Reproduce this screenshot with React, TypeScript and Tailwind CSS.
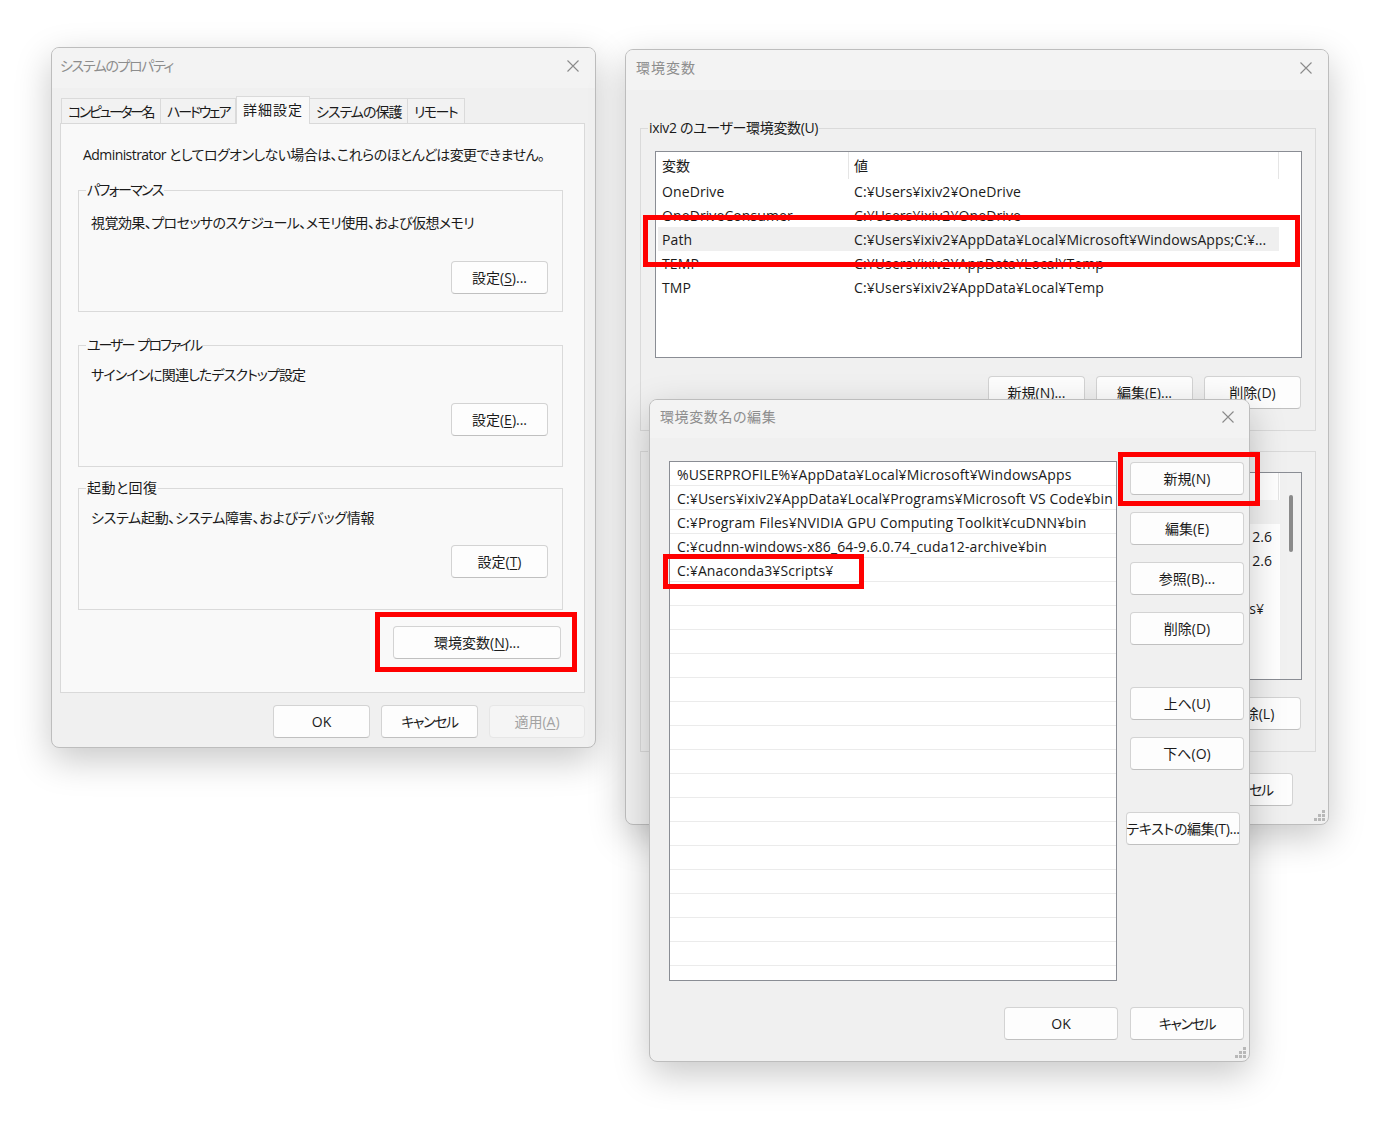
import React from "react";

const FONT =
  "font-['Open_Sans','Noto_Sans_CJK_JP',sans-serif] [font-feature-settings:'palt']";

function CloseX() {
  return (
    <svg width="12" height="12" viewBox="0 0 12 12">
      <path d="M0.5 0.5L11.5 11.5M11.5 0.5L0.5 11.5" stroke="#8a8a8a" strokeWidth="1.1" />
    </svg>
  );
}

function Grip() {
  return (
    <svg width="12" height="12" viewBox="0 0 12 12" className="absolute bottom-[2px] right-[2px]">
      <g fill="#b8b8b8">
        <rect x="8" y="0" width="3" height="3" />
        <rect x="4" y="4" width="3" height="3" />
        <rect x="8" y="4" width="3" height="3" />
        <rect x="0" y="8" width="3" height="3" />
        <rect x="4" y="8" width="3" height="3" />
        <rect x="8" y="8" width="3" height="3" />
      </g>
    </svg>
  );
}

function Btn({
  children,
  className = "",
  disabled = false,
}: {
  children: React.ReactNode;
  className?: string;
  disabled?: boolean;
}) {
  return (
    <div
      className={`flex h-[33px] shrink-0 items-center justify-center whitespace-nowrap rounded-[4px] border text-[14px] ${
        disabled
          ? "border-[#e6e6e6] bg-[#f5f5f5] text-[#a3a3a3]"
          : "border-[#d3d3d3] border-b-[#c0c0c0] bg-[#fdfdfd] text-[#1b1b1b]"
      } ${className}`}
    >
      {children}
    </div>
  );
}

function U({ children }: { children: React.ReactNode }) {
  return <span className="underline underline-offset-2">{children}</span>;
}

function Win({
  className,
  title,
  titleClass,
  children,
  grip = false,
}: {
  className: string;
  title: React.ReactNode;
  titleClass: string;
  children: React.ReactNode;
  grip?: boolean;
}) {
  return (
    <div
      className={`absolute flex flex-col overflow-hidden rounded-[8px] border border-[#bdbdbd] bg-[#f0f0f0] shadow-[0_12px_36px_rgba(0,0,0,0.22)] ${className}`}
    >
      <div className={`flex shrink-0 items-center justify-between bg-[#f3f3f3] pb-[5px] ${titleClass}`}>
        <span className="whitespace-nowrap text-[14px] text-[#8d8d8d]">{title}</span>
        <CloseX />
      </div>
      {children}
      {grip && <Grip />}
    </div>
  );
}

function Group({
  label,
  bg,
  className = "",
  children,
}: {
  label?: React.ReactNode;
  bg: string;
  className?: string;
  children: React.ReactNode;
}) {
  return (
    <div className={`relative flex shrink-0 flex-col border border-[#dadada] ${className}`}>
      {label && (
        <span className={`absolute left-[7px] top-[-11px] flex whitespace-nowrap px-[1px] text-[14px] leading-[20px] ${bg}`}>
          {label}
        </span>
      )}
      {children}
    </div>
  );
}

function SystemProps() {
  const tabs = [
    { t: "コンピューター名", w: "w-[100px]", tr: "tracking-[-2.4px]" },
    { t: "ハードウェア", w: "w-[76px]", tr: "tracking-[-2.2px]" },
    { t: "詳細設定", w: "w-[74px]", tr: "tracking-[1px]", sel: true },
    { t: "システムの保護", w: "w-[99px]", tr: "tracking-[-1px]" },
    { t: "リモート", w: "w-[58px]", tr: "tracking-[-1.6px]" },
  ];
  return (
    <Win
      className="left-[51px] top-[47px] h-[701px] w-[545px]"
      title={<span className="tracking-[-1.4px]">システムのプロパティ</span>}
      titleClass="h-[40px] pl-[8px] pr-[16px]"
    >
      <div className="relative z-10 mt-[8px] flex h-[27px] items-end pl-[9px]">
        {tabs.map((tab) => (
          <div
            key={tab.t}
            className={`flex items-center whitespace-nowrap border border-[#dadada] pl-[6px] text-[14px] ${tab.w} ${tab.tr} ${
              tab.sel
                ? "-mb-px h-[28px] border-b-0 bg-[#f9f9f9] pb-[3px]"
                : "-ml-px h-[25px] border-b-0 bg-[#f2f2f2] first:ml-0"
            }`}
          >
            {tab.t}
          </div>
        ))}
      </div>
      <div className="ml-[8px] flex h-[570px] w-[525px] flex-col border border-[#d9d9d9] bg-[#f9f9f9]">
        <div className="ml-[22px] mt-[21px] whitespace-nowrap text-[14px] leading-[20px] tracking-[-0.57px]">
          Administrator としてログオンしない場合は、これらのほとんどは変更できません。
        </div>
        <Group
          label={<span className="tracking-[-1.6px]">パフォーマンス</span>}
          bg="bg-[#f9f9f9]"
          className="ml-[17px] mt-[25px] h-[122px] w-[485px]"
        >
          <div className="ml-[12px] mt-[22px] whitespace-nowrap text-[14px] leading-[20px] tracking-[-0.55px]">
            視覚効果、プロセッサのスケジュール、メモリ使用、および仮想メモリ
          </div>
          <Btn className="mr-[14px] mt-[28px] w-[97px] self-end">
            設定(<U>S</U>)...
          </Btn>
        </Group>
        <Group
          label={
            <>
              <span className="tracking-[-2px]">ユーザー</span>
              <span className="ml-[4px] tracking-[-1.9px]">プロファイル</span>
            </>
          }
          bg="bg-[#f9f9f9]"
          className="ml-[17px] mt-[33px] h-[122px] w-[485px]"
        >
          <div className="ml-[12px] mt-[19px] whitespace-nowrap text-[14px] leading-[20px] tracking-[-0.9px]">
            サインインに関連したデスクトップ設定
          </div>
          <Btn className="mr-[14px] mt-[18px] w-[97px] self-end">
            設定(<U>E</U>)...
          </Btn>
        </Group>
        <Group
          label={<span className="tracking-[0.4px]">起動と回復</span>}
          bg="bg-[#f9f9f9]"
          className="ml-[17px] mt-[21px] h-[122px] w-[485px]"
        >
          <div className="ml-[12px] mt-[19px] whitespace-nowrap text-[14px] leading-[20px] tracking-[-0.26px]">
            システム起動、システム障害、およびデバッグ情報
          </div>
          <Btn className="mr-[14px] mt-[17px] w-[97px] self-end">
            設定(<U>T</U>)
          </Btn>
        </Group>
        <Btn className="ml-[332px] mt-[16px] w-[168px]">
          環境変数(<U>N</U>)...
        </Btn>
      </div>
      <div className="mt-[12px] flex justify-end gap-[11px] pr-[10px]">
        <Btn className="w-[97px]">OK</Btn>
        <Btn className="w-[97px] tracking-[-1.4px]">キャンセル</Btn>
        <Btn className="w-[96px]" disabled>
          適用(<U>A</U>)
        </Btn>
      </div>
    </Win>
  );
}

function EnvVars() {
  const user = [
    ["OneDrive", "C:¥Users¥ixiv2¥OneDrive"],
    ["OneDriveConsumer", "C:¥Users¥ixiv2¥OneDrive"],
    ["Path", "C:¥Users¥ixiv2¥AppData¥Local¥Microsoft¥WindowsApps;C:¥..."],
    ["TEMP", "C:¥Users¥ixiv2¥AppData¥Local¥Temp"],
    ["TMP", "C:¥Users¥ixiv2¥AppData¥Local¥Temp"],
  ];
  const sys = [
    ["ComSpec", "", "", true],
    ["CUDA_PATH", "C:¥Program Files¥NVIDIA GPU Computing Toolkit¥CUDA¥v12.6", "pr-[7px]"],
    ["CUDA_PATH_V12_6", "C:¥Program Files¥NVIDIA GPU Computing Toolkit¥CUDA¥v12.6", "pr-[7px]"],
    ["DriverData", "", ""],
    ["NVTOOLSEXT_PATH", "C:¥Program Files¥NVIDIA Corporation¥NvToolsExt¥bin¥tools¥", "pr-[15px]"],
    ["OS", "", ""],
    ["", "", ""],
    ["", "", ""],
  ] as [string, string, string, boolean?][];
  return (
    <Win
      className="left-[625px] top-[49px] h-[776px] w-[704px]"
      title={<span className="tracking-[1px]">環境変数</span>}
      titleClass="h-[40px] pl-[10px] pr-[16px]"
      grip
    >
      <Group
        label={<span className="tracking-[-0.35px]">ixiv2 のユーザー環境変数(U)</span>}
        bg="bg-[#f0f0f0]"
        className="ml-[14px] mt-[38px] h-[303px] w-[676px]"
      >
        <div className="ml-[14px] mt-[22px] flex h-[207px] w-[647px] flex-col overflow-hidden border border-[#8a8d94] bg-white text-[14px] tracking-[0.1px]">
          <div className="flex h-[27px] shrink-0">
            <div className="flex w-[193px] items-center border-r border-[#e5e5e5] pl-[6px]">変数</div>
            <div className="flex w-[430px] items-center border-r border-[#e5e5e5] pl-[5px]">値</div>
          </div>
          {user.map(([k, v]) => (
            <div
              key={k}
              className={`ml-[2px] flex h-[24px] w-[621px] shrink-0 items-center whitespace-nowrap ${
                k === "Path" ? "bg-[#efefef]" : ""
              }`}
            >
              <div className="w-[192px] pl-[4px]">{k}</div>
              <div className="pl-[4px]">{v}</div>
            </div>
          ))}
        </div>
        <div className="mr-[14px] mt-[18px] flex justify-end gap-[11px]">
          <Btn className="w-[97px]">新規(N)...</Btn>
          <Btn className="w-[97px]">編集(E)...</Btn>
          <Btn className="w-[97px]">削除(D)</Btn>
        </div>
      </Group>
      <Group label="システム環境変数(S)" bg="bg-[#f0f0f0]" className="ml-[14px] mt-[20px] h-[301px] w-[676px]">
        <div className="ml-[14px] mt-[20px] flex h-[208px] w-[647px] overflow-hidden border border-[#8a8d94] bg-white text-[14px]">
          <div className="flex w-[624px] flex-col">
            <div className="flex h-[27px] shrink-0">
              <div className="flex w-[193px] items-center border-r border-[#e5e5e5] pl-[6px]">変数</div>
              <div className="flex w-[430px] items-center border-r border-[#e5e5e5] pl-[6px]">値</div>
            </div>
            {sys.map(([k, v, pr, sel], i) => (
              <div
                key={i}
                className={`flex h-[24px] w-[624px] shrink-0 items-center whitespace-nowrap ${
                  sel ? "bg-[#f3f3f3]" : ""
                }`}
              >
                <div className="w-[193px] pl-[6px]">{k}</div>
                <div className={`flex w-[430px] justify-end overflow-hidden ${pr}`}>{v}</div>
              </div>
            ))}
          </div>
          <div className="flex w-[22px] justify-center bg-[#f1f1f1] pt-[22px]">
            <div className="h-[57px] w-[4px] rounded-full bg-[#8a8a8a]" />
          </div>
        </div>
        <div className="mr-[14px] mt-[17px] flex justify-end gap-[11px]">
          <Btn className="w-[97px]">新規(W)...</Btn>
          <Btn className="w-[97px]">編集(I)...</Btn>
          <Btn className="w-[97px]">削除(L)</Btn>
        </div>
      </Group>
      <div className="mr-[35px] mt-[21px] flex justify-end gap-[11px]">
        <Btn className="w-[97px]">OK</Btn>
        <Btn className="w-[97px] tracking-[-1.4px]">キャンセル</Btn>
      </div>
    </Win>
  );
}

function EditDialog() {
  const items = [
    "%USERPROFILE%¥AppData¥Local¥Microsoft¥WindowsApps",
    "C:¥Users¥ixiv2¥AppData¥Local¥Programs¥Microsoft VS Code¥bin",
    "C:¥Program Files¥NVIDIA GPU Computing Toolkit¥cuDNN¥bin",
    "C:¥cudnn-windows-x86_64-9.6.0.74_cuda12-archive¥bin",
    "C:¥Anaconda3¥Scripts¥",
  ];
  const rows = Array.from({ length: 22 }, (_, i) => items[i] ?? "");
  return (
    <Win
      className="left-[649px] top-[399px] h-[663px] w-[601px]"
      title={<span className="tracking-[0.6px]">環境変数名の編集</span>}
      titleClass="h-[38px] pl-[10px] pr-[15px]"
      grip
    >
      <div className="ml-[19px] mt-[23px] flex">
        <div className="flex h-[520px] w-[448px] flex-col overflow-hidden border border-[#8a8d94] bg-white text-[14px] tracking-[0.13px]">
          {rows.map((r, i) => (
            <div
              key={i}
              className="flex h-[24px] shrink-0 items-center whitespace-nowrap border-b border-[#ebebeb] pl-[7px] pt-[2px]"
            >
              {r}
            </div>
          ))}
        </div>
        <div className="ml-[13px] flex w-[114px] flex-col">
          <Btn className="mt-[1px] w-[114px]">新規(N)</Btn>
          <Btn className="mt-[17px] w-[114px]">編集(E)</Btn>
          <Btn className="mt-[17px] w-[114px]">参照(B)...</Btn>
          <Btn className="mt-[17px] w-[114px]">削除(D)</Btn>
          <Btn className="mt-[42px] w-[114px]">上へ(U)</Btn>
          <Btn className="mt-[17px] w-[114px]">下へ(O)</Btn>
          <Btn className="-ml-[4px] mt-[42px] w-[114px] tracking-[-0.3px]">テキストの編集(T)...</Btn>
        </div>
      </div>
      <div className="mr-[5px] mt-[26px] flex justify-end gap-[12px]">
        <Btn className="w-[114px]">OK</Btn>
        <Btn className="w-[114px] tracking-[-1.4px]">キャンセル</Btn>
      </div>
    </Win>
  );
}

function RedBox({ className }: { className: string }) {
  return <div className={`pointer-events-none absolute border-[5px] border-[#ff0000] ${className}`} />;
}

export default function App() {
  return (
    <div className={`relative h-[1133px] w-[1381px] overflow-hidden bg-white text-[#1a1a1a] ${FONT}`}>
      <SystemProps />
      <EnvVars />
      <EditDialog />
      <RedBox className="left-[375px] top-[612px] h-[60px] w-[202px]" />
      <RedBox className="left-[643px] top-[215px] h-[52px] w-[657px]" />
      <RedBox className="left-[1118px] top-[452px] h-[54px] w-[142px]" />
      <RedBox className="left-[663px] top-[554px] h-[35px] w-[201px]" />
    </div>
  );
}
